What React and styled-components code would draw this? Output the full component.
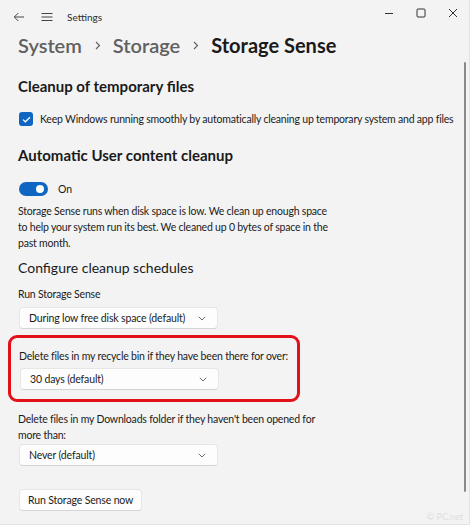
import React from "react";
import styled, { createGlobalStyle } from "styled-components";

const GlobalStyle = createGlobalStyle`
  html, body {
    margin: 0;
    padding: 0;
    background: #ffffff;
  }
  body {
    font-family: "Segoe UI", Lato, "Liberation Sans", sans-serif;
    color: #1b1b1b;
  }
`;

const Window = styled.div`
  position: relative;
  width: 470px;
  height: 525px;
  background: #f3f3f3;
  border-right: 1px solid #e2e2e2;
  border-bottom: 1px solid #e2e2e2;
  box-sizing: border-box;
  overflow: hidden;
`;

const TitleBar = styled.div`
  display: flex;
  align-items: center;
  height: 34px;
  padding-left: 11px;
`;

const NavIcon = styled.span`
  display: flex;
  align-items: center;
  justify-content: center;
  width: 16px;
  height: 16px;
  margin-right: ${(p) => p.gap || 12}px;
  color: #3a3a3a;
`;

const AppName = styled.span`
  font-size: 10px;
  color: #2b2b2b;
  margin-left: 1px;
`;

const Caption = styled.div`
  margin-left: auto;
  display: flex;
  align-self: flex-start;
`;

const CaptionButton = styled.span`
  width: 32px;
  height: 25px;
  display: flex;
  align-items: center;
  justify-content: center;
  color: #2b2b2b;
`;

const Content = styled.div`
  padding: 0 18px;
`;

const Breadcrumb = styled.div`
  display: flex;
  align-items: center;
  height: 26px;
  margin-top: -2px;
  font-size: 20px;
`;

const Crumb = styled.span`
  color: ${(p) => (p.current ? "#1a1a1a" : "#606060")};
  font-weight: ${(p) => (p.current ? 700 : 600)};
`;

const CrumbSep = styled.span`
  display: flex;
  align-items: center;
  color: #606060;
  margin: 0 12px 0 13px;
`;

const SectionTitle = styled.h2`
  margin: ${(p) => p.top || 0}px 0 0;
  font-size: ${(p) => p.size || 15}px;
  font-weight: ${(p) => p.weight || 700};
  line-height: 20px;
  color: #1a1a1a;
`;

const CheckRow = styled.label`
  display: flex;
  align-items: center;
  margin-top: 16px;
  font-size: 10.5px;
  letter-spacing: -0.2px;
  white-space: nowrap;
`;

const Checkbox = styled.span`
  width: 14px;
  height: 14px;
  border-radius: 3px;
  background: #0f66c2;
  display: flex;
  align-items: center;
  justify-content: center;
  margin: 0 7px 0 1px;
  flex-shrink: 0;
`;

const ToggleRow = styled.div`
  display: flex;
  align-items: center;
  margin-top: 17px;
  font-size: 10.5px;
`;

const Toggle = styled.span`
  position: relative;
  width: 29px;
  height: 14px;
  border-radius: 8px;
  background: #0f66c2;
  margin: 0 10px 0 1px;

  &::after {
    content: "";
    position: absolute;
    top: 3px;
    right: 4px;
    width: 8px;
    height: 8px;
    border-radius: 50%;
    background: #ffffff;
  }
`;

const Paragraph = styled.p`
  margin: ${(p) => p.top || 0}px 0 0;
  font-size: 10.5px;
  letter-spacing: -0.2px;
  line-height: 16px;
  width: ${(p) => p.width || "auto"};
  color: #1b1b1b;
  white-space: ${(p) => (p.nowrap ? "nowrap" : "normal")};
`;

const Field = styled.div`
  margin-top: ${(p) => p.top || 0}px;
`;

const Select = styled.div`
  display: flex;
  align-items: center;
  justify-content: space-between;
  width: 199px;
  height: 22px;
  box-sizing: border-box;
  margin-top: ${(p) => p.top ?? 4}px;
  margin-left: 1px;
  padding: 0 11px 0 9px;
  background: #fdfdfd;
  border: 1px solid #e6e6e6;
  border-bottom-color: #d4d4d4;
  border-radius: 4px;
  font-size: 10.5px;
  letter-spacing: -0.15px;
  color: #1b1b1b;
  white-space: nowrap;
`;

const Highlight = styled.div`
  margin: 6px 0 0 -10px;
  width: 292px;
  box-sizing: border-box;
  border: 3px solid #e3101a;
  border-radius: 9px;
  padding: 10px 8px 9px 8px;
`;

const Button = styled.button`
  display: block;
  margin: 23px 0 0 1px;
  height: 22px;
  padding: 0 8px;
  background: #fdfdfd;
  border: 1px solid #e6e6e6;
  border-bottom-color: #d4d4d4;
  border-radius: 4px;
  font-family: inherit;
  font-size: 10.5px;
  letter-spacing: -0.15px;
  color: #1b1b1b;
`;

const Scrollbar = styled.div`
  position: absolute;
  right: 3px;
  top: 62px;
  width: 2px;
  height: 430px;
  border-radius: 1px;
  background: #8a8a8a;
`;

const Watermark = styled.span`
  position: absolute;
  right: 6px;
  bottom: 2px;
  font-size: 9px;
  color: #dedede;
`;

const Chevron = () => (
  <svg width="8" height="5" viewBox="0 0 8 5">
    <path d="M0.8 0.8 L4 4 L7.2 0.8" fill="none" stroke="#5a5a5a" strokeWidth="0.9" />
  </svg>
);

const Row = ({ text, top }) => (
  <Select top={top}>
    <span>{text}</span>
    <Chevron />
  </Select>
);

const CrumbChevron = () => (
  <CrumbSep>
    <svg width="6" height="9" viewBox="0 0 6 9">
      <path d="M1 1 L4.5 4.5 L1 8" fill="none" stroke="#606060" strokeWidth="1.1" />
    </svg>
  </CrumbSep>
);

export default function App() {
  return (
    <>
      <GlobalStyle />
      <Window>
        <TitleBar>
          <NavIcon gap={12}>
            <svg width="12" height="10" viewBox="0 0 12 10">
              <path d="M11 5 H1.5 M5.3 1 L1.3 5 L5.3 9" fill="none" stroke="#444" strokeWidth="1" />
            </svg>
          </NavIcon>
          <NavIcon gap={11}>
            <svg width="12" height="10" viewBox="0 0 12 10">
              <path d="M0.5 1.5 H11.5 M0.5 5 H11.5 M0.5 8.5 H11.5" fill="none" stroke="#444" strokeWidth="1" />
            </svg>
          </NavIcon>
          <AppName>Settings</AppName>
          <Caption>
            <CaptionButton>
              <svg width="10" height="10" viewBox="0 0 10 10">
                <path d="M1 5.5 H9" stroke="#333" strokeWidth="1" />
              </svg>
            </CaptionButton>
            <CaptionButton>
              <svg width="10" height="10" viewBox="0 0 10 10">
                <rect x="1" y="1" width="8" height="8" rx="1" fill="none" stroke="#333" strokeWidth="1" />
              </svg>
            </CaptionButton>
            <CaptionButton>
              <svg width="10" height="10" viewBox="0 0 10 10">
                <path d="M1 1 L9 9 M9 1 L1 9" stroke="#333" strokeWidth="1" />
              </svg>
            </CaptionButton>
          </Caption>
        </TitleBar>

        <Content>
          <Breadcrumb>
            <Crumb>System</Crumb>
            <CrumbChevron />
            <Crumb>Storage</Crumb>
            <CrumbChevron />
            <Crumb current>Storage Sense</Crumb>
          </Breadcrumb>

          <SectionTitle top={18}>Cleanup of temporary files</SectionTitle>
          <CheckRow>
            <Checkbox>
              <svg width="9" height="7" viewBox="0 0 9 7">
                <path d="M1 3.6 L3.3 5.8 L8 1.2" fill="none" stroke="#fff" strokeWidth="1.2" />
              </svg>
            </Checkbox>
            Keep Windows running smoothly by automatically cleaning up temporary system and app files
          </CheckRow>

          <SectionTitle top={19}>Automatic User content cleanup</SectionTitle>
          <ToggleRow>
            <Toggle />
            On
          </ToggleRow>
          <Paragraph top={7} width="318px">
            Storage Sense runs when disk space is low. We clean up enough space to help your system run its
            best. We cleaned up 0 bytes of space in the past month.
          </Paragraph>

          <SectionTitle top={7} size={14} weight={400}>
            Configure cleanup schedules
          </SectionTitle>
          <Field top={8}>
            <Paragraph>Run Storage Sense</Paragraph>
            <Row text="During low free disk space (default)" top={5} />
          </Field>

          <Highlight>
            <Paragraph nowrap>Delete files in my recycle bin if they have been there for over:</Paragraph>
            <Row text="30 days (default)" top={4} />
          </Highlight>

          <Field top={9}>
            <Paragraph width="318px">
              Delete files in my Downloads folder if they haven't been opened for more than:
            </Paragraph>
            <Row text="Never (default)" top={1} />
          </Field>

          <Button>Run Storage Sense now</Button>
        </Content>
        <Scrollbar />
        <Watermark>© PC.net</Watermark>
      </Window>
    </>
  );
}
